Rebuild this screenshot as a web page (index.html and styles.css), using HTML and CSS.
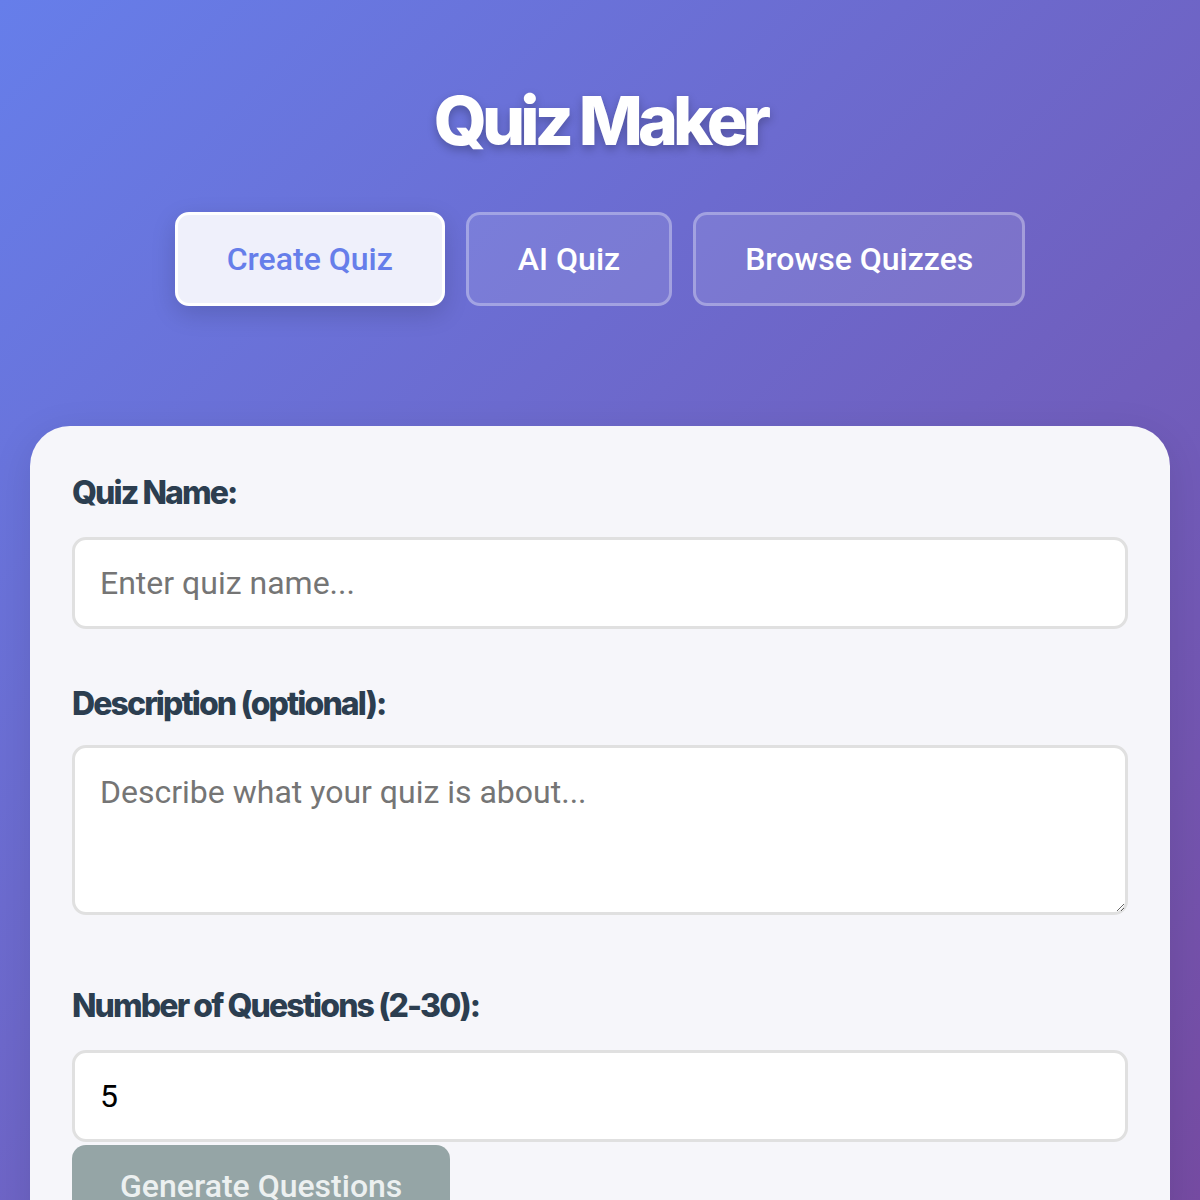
FILE: index.html
```html
<!DOCTYPE html>
<html lang="en">
<head>
    <meta charset="UTF-8">
    <meta name="viewport" content="width=device-width, initial-scale=1.0">
    <title>Quiz Maker</title>
    <link rel="stylesheet" href="styles.css">
</head>
<body>

    <div class="app">
        <h1 class="title">Quiz Maker</h1>

        <nav class="tabs">
            <button class="tab active">Create Quiz</button>
            <button class="tab">AI Quiz</button>
            <button class="tab">Browse Quizzes</button>
        </nav>

        <div class="card">
            <div class="form-group">
                <label for="quizName">Quiz Name:</label>
                <input type="text" id="quizName" placeholder="Enter quiz name...">
            </div>

            <div class="form-group desc-group">
                <label for="quizDesc">Description (optional):</label>
                <textarea id="quizDesc" placeholder="Describe what your quiz is about..."></textarea>
            </div>

            <div class="form-group last">
                <label for="numQuestions">Number of Questions (2-30):</label>
                <input type="number" id="numQuestions" min="2" max="30" value="5">
            </div>

            <button class="generate-btn" disabled>Generate Questions</button>
        </div>
    </div>

</body>
</html>
```

FILE: styles.css
```css
* {
    box-sizing: border-box;
}

body {
    margin: 0;
    font-family: Roboto, "Liberation Sans", sans-serif;
    background: linear-gradient(135deg, #667eea 0%, #764ba2 100%);
    min-height: 100vh;
}

.app {
    padding: 80px 30px 0;
}

.title {
    margin: 0;
    text-align: center;
    color: #fff;
    font-family: Inter, "Liberation Sans", sans-serif;
    font-weight: 800;
    font-size: 68px;
    letter-spacing: -5px;
    line-height: 1.2;
    text-shadow: 0 4px 10px rgba(0, 0, 0, 0.25);
}

.tabs {
    display: flex;
    justify-content: center;
    gap: 21px;
    margin-top: 50px;
}

.tab {
    font-family: Roboto, sans-serif;
    font-size: 32px;
    font-weight: 500;
    padding: 25px 49px;
    border: 3px solid rgba(255, 255, 255, 0.3);
    border-radius: 14px;
    background: rgba(255, 255, 255, 0.1);
    color: #fff;
    cursor: pointer;
}

.tab.active {
    background: #eff0fb;
    border-color: #fff;
    color: #667eea;
    box-shadow: 0 8px 24px rgba(0, 0, 0, 0.15);
}

.card {
    margin-top: 120px;
    background: #f6f6fa;
    border-radius: 40px 40px 0 0;
    padding: 48px 42px 0;
    box-shadow: 0 10px 40px rgba(0, 0, 0, 0.1);
}

.form-group {
    margin-bottom: 56px;
}

.form-group.desc-group {
    margin-bottom: 72px;
}

.form-group.desc-group label {
    margin-bottom: 22px;
}

.form-group.last {
    margin-bottom: 0;
}

label {
    display: block;
    margin-bottom: 25px;
    font-family: Inter, "Liberation Sans", sans-serif;
    font-weight: 800;
    font-size: 32px;
    line-height: 38px;
    letter-spacing: -1.9px;
    color: #2c3e50;
}

input,
textarea {
    display: block;
    width: 100%;
    padding: 25px;
    border: 3px solid #e0e0e0;
    border-radius: 14px;
    background: #fff;
    font-family: Roboto, sans-serif;
    font-size: 32px;
    color: #000;
}

input {
    height: 92px;
    padding-top: 0;
    padding-bottom: 0;
}

input::placeholder,
textarea::placeholder {
    color: #757575;
}

textarea {
    height: 170px;
    resize: vertical;
}

.generate-btn {
    margin-top: 3px;
    padding: 22px 48px;
    border: none;
    border-radius: 14px;
    background: #95a5a6;
    color: #ecf0f0;
    font-family: Roboto, sans-serif;
    font-size: 32px;
    font-weight: 500;
}
```
